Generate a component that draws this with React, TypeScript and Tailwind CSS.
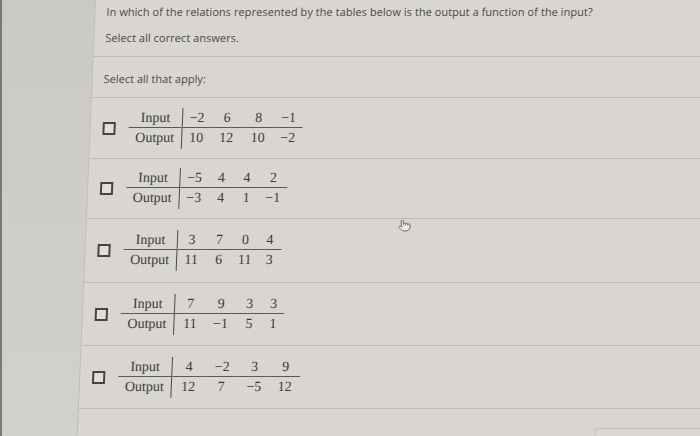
import { Pointer } from "lucide-react";

type Table = {
  inputs: string[];
  outputs: string[];
  cols: string[];
  h: string;
};

const tables: Table[] = [
  { inputs: ["−2", "6", "8", "−1"], outputs: ["10", "12", "10", "−2"], cols: ["w-[28px]", "w-[32px]", "w-[31px]", "w-[29px]"], h: "h-[61px]" },
  { inputs: ["−5", "4", "4", "2"], outputs: ["−3", "4", "1", "−1"], cols: ["w-[28px]", "w-[26px]", "w-[25px]", "w-[28px]"], h: "h-[60px]" },
  { inputs: ["3", "7", "0", "4"], outputs: ["11", "6", "11", "3"], cols: ["w-[28px]", "w-[27px]", "w-[25px]", "w-[24px]"], h: "h-[64px]" },
  { inputs: ["7", "9", "3", "3"], outputs: ["11", "−1", "5", "1"], cols: ["w-[31px]", "w-[30px]", "w-[27px]", "w-[21px]"], h: "h-[63px]" },
  { inputs: ["4", "−2", "3", "9"], outputs: ["12", "7", "−5", "12"], cols: ["w-[33px]", "w-[33px]", "w-[32px]", "w-[30px]"], h: "h-[63px]" },
];

function IOTable({ t }: { t: Table }) {
  return (
    <div className="flex font-['Liberation_Serif',serif] text-[14px] text-[#3c3c3c]">
      <div className="w-[54px] border-r border-[#4a4a4a] flex flex-col">
        <div className="h-[20px] leading-[20px] text-center border-b border-[#5a5a5a]">Input</div>
        <div className="h-[21px] leading-[20px] text-center">Output</div>
      </div>
      {t.inputs.map((v, i) => (
        <div key={i} className={`${t.cols[i]} flex flex-col`}>
          <div className="h-[20px] leading-[20px] text-center border-b border-[#5a5a5a]">{v}</div>
          <div className="h-[21px] leading-[20px] text-center">{t.outputs[i]}</div>
        </div>
      ))}
    </div>
  );
}

export default function App() {
  return (
    <div className="relative w-[700px] h-[436px] overflow-hidden border-l-[2px] border-[#7a7976] bg-gradient-to-b from-[#cbc9c4] to-[#d3d1cc] font-['Open_Sans',sans-serif]">
      <div className="ml-[93px] w-[660px] h-full origin-top-left skew-x-[-2.4deg] bg-[#d9d6d1] border-l border-[#c0bdb7]">
        {/* Question */}
        <div className="h-[57px] border-b border-[#bfbcb6] pl-[11px] pt-[4px] text-[11px] tracking-[0.05px] text-[#4a4a4a]">
          <p className="leading-[16px]">
            In which of the relations represented by the tables below is the output a function of the input?
          </p>
          <p className="leading-[16px] mt-[10px]">Select all correct answers.</p>
        </div>

        <div className="h-[41px] border-b border-[#bfbcb6] pl-[11px] pt-[4px] flex items-center text-[11px] text-[#4a4a4a]">
          Select all that apply:
        </div>

        {/* Options */}
        {tables.map((t, i) => (
          <div key={i} className={`${t.h} border-b border-[#bfbcb6] flex items-center pl-[12px]`}>
            <div className="w-[13px] h-[13px] border-2 border-[#444] bg-[#e2dfda] shrink-0" />
            <div className="ml-[13px]">
              <IOTable t={t} />
            </div>
          </div>
        ))}

        <div className="pt-[19px] pl-[517px]">
          <div className="w-[120px] h-[24px] border border-[#c4c1bb] rounded-[3px] bg-[#dbd8d3]" />
        </div>
      </div>

      <Pointer
        className="absolute left-[396px] top-[219px] text-[#555] fill-[#eeeeee]"
        size={13}
        strokeWidth={1.5}
      />
    </div>
  );
}
